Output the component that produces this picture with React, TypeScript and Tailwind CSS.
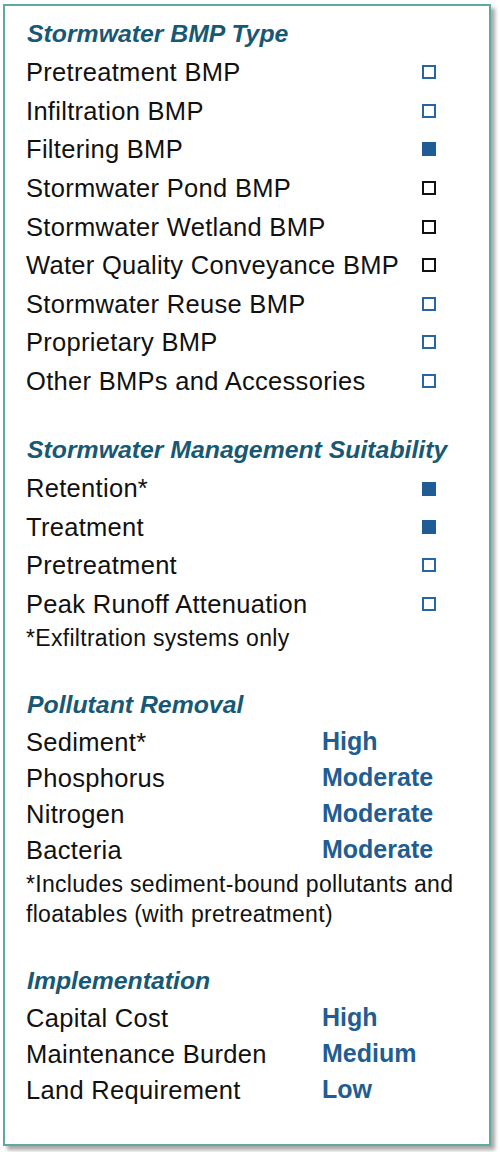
import { FC } from 'react';

type Mark = 'blue' | 'black' | 'filled';

const bmpTypes: [string, Mark][] = [
  ['Pretreatment BMP', 'blue'],
  ['Infiltration BMP', 'blue'],
  ['Filtering BMP', 'filled'],
  ['Stormwater Pond BMP', 'black'],
  ['Stormwater Wetland BMP', 'black'],
  ['Water Quality Conveyance BMP', 'black'],
  ['Stormwater Reuse BMP', 'blue'],
  ['Proprietary BMP', 'blue'],
  ['Other BMPs and Accessories', 'blue'],
];

const suitability: [string, Mark][] = [
  ['Retention*', 'filled'],
  ['Treatment', 'filled'],
  ['Pretreatment', 'blue'],
  ['Peak Runoff Attenuation', 'blue'],
];

const pollutants: [string, string][] = [
  ['Sediment*', 'High'],
  ['Phosphorus', 'Moderate'],
  ['Nitrogen', 'Moderate'],
  ['Bacteria', 'Moderate'],
];

const implementation: [string, string][] = [
  ['Capital Cost', 'High'],
  ['Maintenance Burden', 'Medium'],
  ['Land Requirement', 'Low'],
];

const Box: FC<{ mark: Mark }> = ({ mark }) => {
  if (mark === 'filled') return <span className="block w-[14px] h-[14px] bg-[#1f5b94]" />;
  if (mark === 'black') return <span className="block w-[14px] h-[14px] border-2 border-[#111]" />;
  return <span className="block w-[14px] h-[14px] border-2 border-[#2766a3]" />;
};

const Heading: FC<{ children: string; className?: string }> = ({ children, className = '' }) => (
  <div className={`h-[38px] leading-[38px] text-[24.8px] font-bold italic text-[#175875] pl-px ${className}`}>
    {children}
  </div>
);

export default function App() {
  return (
    <div className="w-[500px] h-[1152px] bg-white pt-[4px] pl-[3px]" style={{ fontFamily: '"Liberation Sans", Arial, sans-serif' }}>
      <div className="w-[488px] h-[1142px] border-2 border-[#5fa9a1] bg-white shadow-[4px_4px_4px_rgba(0,0,0,0.35)] pt-[9px] pl-[21px] text-[#111]">
        <Heading>Stormwater BMP Type</Heading>
        {bmpTypes.map(([label, mark]) => (
          <div key={label} className="flex items-center h-[38.6px] text-[25.5px] tracking-[0.3px]">
            <span className="w-[396px]">{label}</span>
            <Box mark={mark} />
          </div>
        ))}

        <Heading className="mt-[31px]">Stormwater Management Suitability</Heading>
        {suitability.map(([label, mark]) => (
          <div key={label} className="flex items-center h-[38.4px] text-[25.5px] tracking-[0.3px]">
            <span className="w-[396px]">{label}</span>
            <Box mark={mark} />
          </div>
        ))}
        <div className="h-[30px] leading-[30px] text-[23px] tracking-[0.3px]">*Exfiltration systems only</div>

        <Heading className="mt-[33px]">Pollutant Removal</Heading>
        {pollutants.map(([label, value]) => (
          <div key={label} className="flex items-center h-[36px] text-[25.5px]">
            <span className="w-[296px] tracking-[0.3px]">{label}</span>
            <span className="font-bold text-[25px] text-[#1f5d93]">{value}</span>
          </div>
        ))}
        <div className="text-[23px] leading-[30px] pt-px tracking-[0.3px]">
          *Includes sediment-bound pollutants and
          <br />
          floatables (with pretreatment)
        </div>

        <Heading className="mt-[33px]">Implementation</Heading>
        {implementation.map(([label, value]) => (
          <div key={label} className="flex items-center h-[36px] text-[25.5px]">
            <span className="w-[296px] tracking-[0.3px]">{label}</span>
            <span className="font-bold text-[25px] text-[#1f5d93]">{value}</span>
          </div>
        ))}
      </div>
    </div>
  );
}
